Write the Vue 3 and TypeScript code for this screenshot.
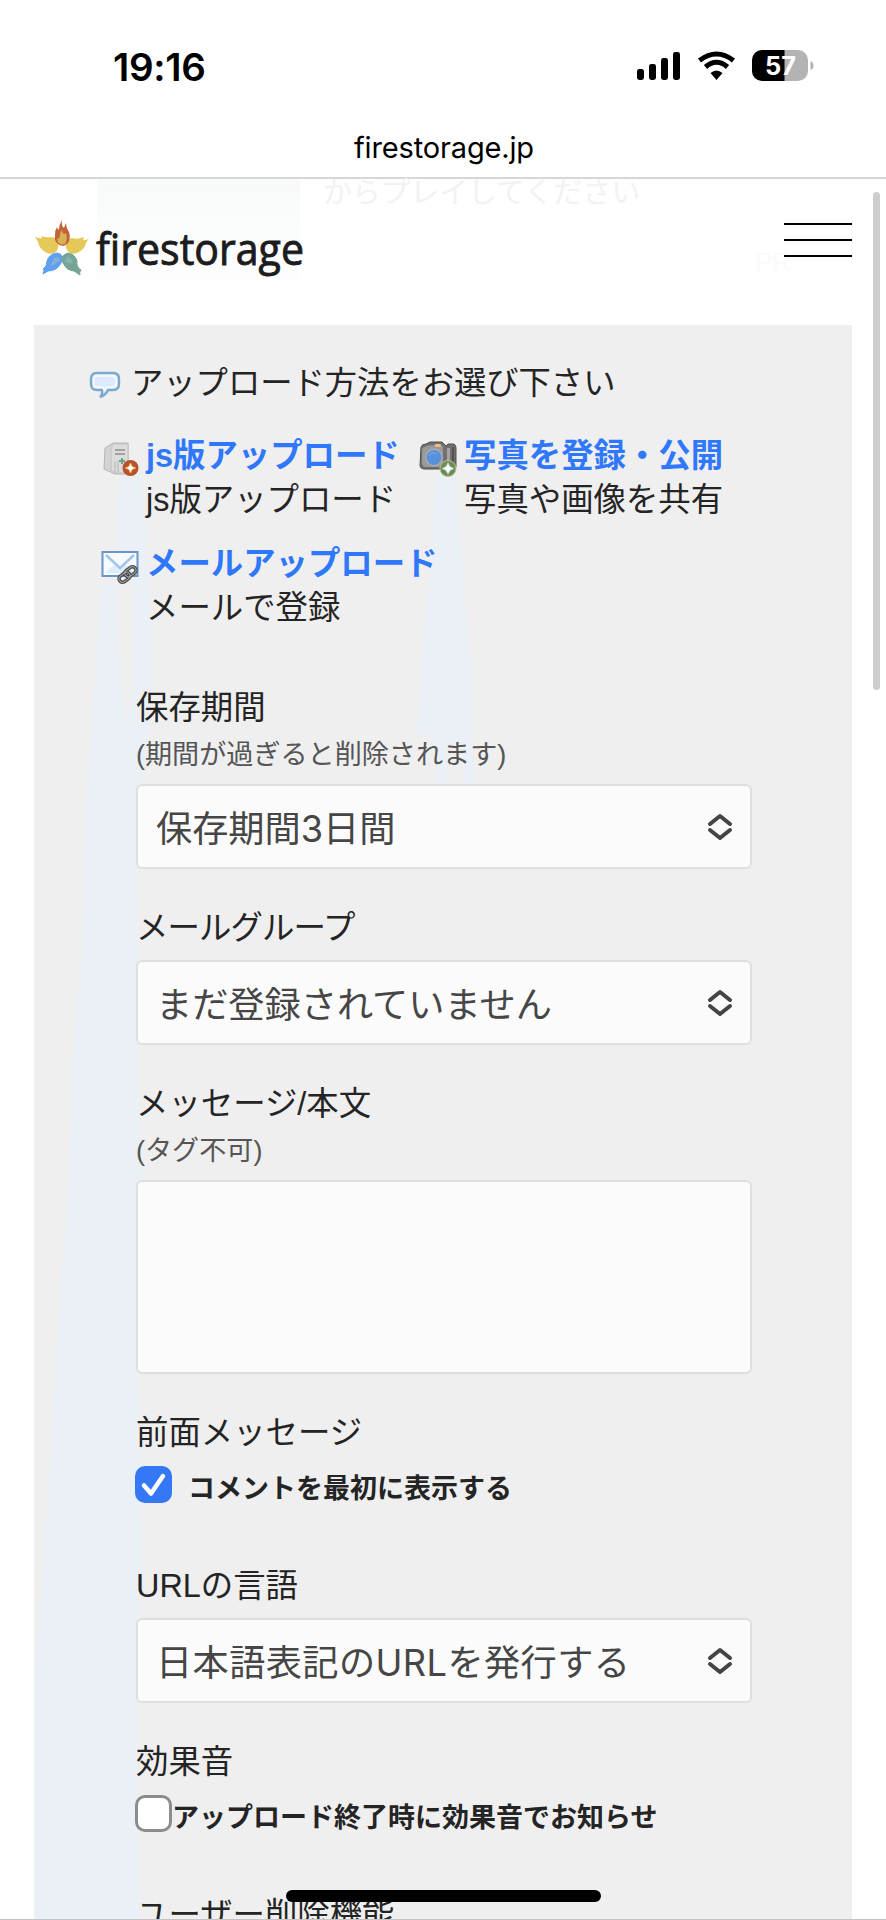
<script setup lang="ts">
import { ref } from 'vue'

interface Method {
  icon: 'server' | 'camera' | 'mail'
  title: string
  note: string
}

const methods: Method[] = [
  { icon: 'server', title: 'js版アップロード', note: 'js版アップロード' },
  { icon: 'camera', title: '写真を登録・公開', note: '写真や画像を共有' },
  { icon: 'mail', title: 'メールアップロード', note: 'メールで登録' },
]

const period = ref('保存期間3日間')
const group = ref('まだ登録されていません')
const message = ref('')
const showComment = ref(true)
const language = ref('日本語表記のURLを発行する')
const playSound = ref(false)
</script>

<template>
  <div class="phone">
    <header class="status">
      <div class="status-row">
        <div class="clock">19:16</div>
        <svg class="signals" width="180" height="40" viewBox="0 0 180 40">
          <rect x="1" y="22" width="7" height="11" rx="2.4" />
          <rect x="13" y="17" width="7" height="16" rx="2.4" />
          <rect x="25" y="11" width="7" height="22" rx="2.4" />
          <rect x="37" y="5" width="7" height="28" rx="2.4" />
          <g fill="none" stroke="#000" stroke-width="5">
            <path d="M63.5 13.5Q80.500 0.500 97.500 13.5" />
            <path d="M69.500 20Q80.500 10.500 91.500 20" />
          </g>
          <path d="M74.500 26Q80.500 21 86.500 26L80.500 33Z" />
          <clipPath id="cell"><rect x="116" y="3" width="56" height="31" rx="10" /></clipPath>
          <g clip-path="url(#cell)">
            <rect x="116" y="3" width="56" height="31" fill="#b3b3b3" />
            <rect x="116" y="3" width="32.500" height="31" />
          </g>
          <path d="M174.500 14Q177.500 15 177.500 18.500T174.500 23Z" fill="#b3b3b3" />
          <text class="charge" x="129" y="28" textLength="31" lengthAdjust="spacingAndGlyphs">57</text>
        </svg>
      </div>
      <div class="host">firestorage.jp</div>
    </header>

    <div class="site-head">
      <div class="ghost-image"></div>
      <div class="ghost-text">からプレイしてください</div>
      <div class="ghost-pr">PR</div>
      <svg class="logo" width="290" height="76" viewBox="0 0 290 76">
        <g transform="translate(0 4)">
          <path d="M1 16Q4 19 8 18Q6 15 6 16Q13 18 18 17Q26 19 24 28Q21 36 13 33Q5 29 4 22Z" fill="#e4c858" />
          <path d="M55 18Q52 21 49 20L50 17Q43 20 38 18Q30 20 32 28Q36 36 43 33Q51 29 52 23Z" fill="#e4c858" />
          <path d="M13 41Q15 34 23 33Q31 34 27 43Q23 51 14 51L9 54Q11 50 9 49Q13 47 13 41Z" fill="#5f9ff0" stroke="#5f9ff0" />
          <path d="M43 41Q41 34 34 33Q25 36 29 43Q33 51 40 51L46 55Q45 52 47 50Q42 47 43 41Z" fill="#76a493" stroke="#76a493" />
          <path d="M28 0Q27 6 30 8L32 3Q32 8 35 12Q38 23 29 26Q19 24 21 15Q21 10 23 7Q24 11 25 9Q25 5 28 0Z" fill="#c2613a" />
          <path d="M28 10Q29 16 32 13Q34 20 31 24Q23 26 23 18Q25 20 26 16Q26 12 28 10Z" fill="#d6b255" />
          <path d="M20 38Q25 36 26 40Q21 45 16 47ZM33 37Q37 36 39 43Q34 44 31 41Z" fill="#91b7cf" opacity=".7" />
        </g>
        <text x="62" y="48.500" textLength="208" lengthAdjust="spacingAndGlyphs">firestorage</text>
      </svg>
      <button class="menu" aria-label="menu"><i></i><i></i><i></i></button>
    </div>

    <main class="panel">
      <svg class="streaks" width="818" height="1595" viewBox="34 325 818 1595">
        <path d="M120 476L141 476L146 530L149 580L152 640L151 720L142 784L136 870L139 960L137 1080L143 1180L137 1210L137 1380L142 1540L141 1640L137 1700L138 1830L141 1920L34 1920L34 1680L42 1590L51 1450L61 1290L70 1160L72 1070L82 950L84 850L87 784L93 720L97 640L101 584L116 584L118 640L122 700L127 722L132 700L132 640L134 590L116 570L118 510Z" />
        <path d="M436 474L454 474L458 520L463 560L466 620L472 670L473 740L475 784L464 784L465 745L448 745L447 784L437 784L432 740L416 730L421 690L423 640L430 570L432 520Z" />
      </svg>

      <h1 class="title">
        <svg width="34" height="32" viewBox="0 0 34 32">
          <path d="M7.500 3H24Q30 3 30 9V14Q30 20 24 20H19Q17 25 11 27Q14 24 13 20H8Q2 20 2 14V9Q2 3 7.500 3Z" fill="#e8f1ff" stroke="#7ba9cd" stroke-width="2.400" />
          <path d="M8 6H24Q27 6 27 10V13Q27 17 23 17H17L15 20L14 17H8Q5 17 5 13V10Q5 6 8 6Z" fill="#deebff" stroke="#fff" />
        </svg>
        <span>アップロード方法をお選び下さい</span>
      </h1>

      <div class="methods">
        <a v-for="m in methods" :key="m.title" class="method" :class="m.icon">
          <svg v-if="m.icon === 'server'" width="40" height="40" viewBox="0 0 40 40">
            <path d="M4 7L12 2H27L27 33L14 33L3 28Z" fill="#d4d4d4" stroke="#b4b4b4" />
            <path d="M12 3H27V32H14L10 29V8Z" fill="#dcdcdc" stroke="#c2c2c2" />
            <path d="M14 9H24M14 13H24" stroke="#8f8f8f" stroke-width="1.600" />
            <path d="M14 20V31M17 20V31" stroke="#b4b4b4" />
            <path d="M21 17V23M18 20H24" stroke="#64a386" stroke-width="2" />
            <circle cx="29.500" cy="27" r="8" fill="#b7522d" />
            <path d="M29.500 22L31 25.500L34.500 27L31 28.500L29.500 32L28 28.500L24.500 27L28 25.500Z" fill="#fff" stroke="#f0c675" />
          </svg>
          <svg v-else-if="m.icon === 'camera'" width="40" height="40" viewBox="0 0 40 40">
            <path d="M2 6Q3 3 7 3L11 1H23L27 5L29 3H35Q37 4 37 7V26Q35 28 31 28H5Q2 28 1 25Z" fill="#707070" stroke="#505050" />
            <path d="M3 7Q12 2 24 5V26H5L3 23Z" fill="#999" />
            <path d="M28 7H31V25H28Z" fill="#a4a4a4" />
            <path d="M33 6H35V24H33Z" fill="#515151" />
            <rect x="16" y="3" width="6" height="3" rx="1" fill="#f0bd76" />
            <circle cx="15" cy="16.500" r="9" fill="#adadad" />
            <circle cx="15" cy="16.500" r="7.500" fill="#5791dc" />
            <path d="M10 15Q12 10 18 13" stroke="#84aadc" fill="none" />
            <circle cx="29" cy="27.500" r="8" fill="#668c61" stroke="#d6bf75" />
            <path d="M29 21.500L31 25.500L35 27.500L31 29.500L29 33.500L27 29.500L23 27.500L27 25.500Z" fill="#fff" stroke="#a3c9a5" />
          </svg>
          <svg v-else width="40" height="40" viewBox="0 0 40 40">
            <rect x="1.500" y="3" width="35" height="24" fill="#f5faff" stroke="#6896c9" stroke-width="2" />
            <path d="M4 24L14 15L19 19L24 15L34 24Z" fill="#e0edff" />
            <path d="M5 6L19 19L33 6" fill="none" stroke="#a5c5e5" stroke-width="2.500" />
            <g fill="none" transform="translate(26.500 25.500) rotate(-36)">
              <rect x="-10" y="-3" width="12" height="7" rx="3.500" stroke="#494949" stroke-width="3.500" />
              <rect x="-2" y="-4" width="12" height="7" rx="3.500" stroke="#494949" stroke-width="3.500" />
              <rect x="-10" y="-3" width="12" height="7" rx="3.500" stroke="#a8a8a8" />
              <rect x="-2" y="-4" width="12" height="7" rx="3.500" stroke="#a8a8a8" />
            </g>
          </svg>
          <span class="method-text"><b>{{ m.title }}</b><span>{{ m.note }}</span></span>
        </a>
      </div>

      <form class="form" @submit.prevent>
        <section class="field">
          <label class="name">保存期間</label>
          <p class="hint">(期間が過ぎると削除されます)</p>
          <div class="picker">
            <select v-model="period"><option>保存期間3日間</option></select>
            <svg width="26" height="30" viewBox="0 0 26 30"><path d="M3 12L13 4L23 12M3 18L13 26L23 18" /></svg>
          </div>
        </section>

        <section class="field">
          <label class="name tight">メールグループ</label>
          <div class="picker">
            <select v-model="group"><option>まだ登録されていません</option></select>
            <svg width="26" height="30" viewBox="0 0 26 30"><path d="M3 12L13 4L23 12M3 18L13 26L23 18" /></svg>
          </div>
        </section>

        <section class="field">
          <label class="name">メッセージ/本文</label>
          <p class="hint">(タグ不可)</p>
          <textarea v-model="message"></textarea>
        </section>

        <section class="field check-field">
          <label class="name">前面メッセージ</label>
          <label class="check spaced">
            <input v-model="showComment" type="checkbox" />
            <svg v-if="showComment" width="37" height="37" viewBox="0 0 37 37"><path d="M9 19.500L16 27.500L28 10" /></svg>
            <span>コメントを最初に表示する</span>
          </label>
        </section>

        <section class="field">
          <label class="name">URLの言語</label>
          <div class="picker wide">
            <select v-model="language"><option>日本語表記のURLを発行する</option></select>
            <svg width="26" height="30" viewBox="0 0 26 30"><path d="M3 12L13 4L23 12M3 18L13 26L23 18" /></svg>
          </div>
        </section>

        <section class="field check-field">
          <label class="name">効果音</label>
          <label class="check">
            <input v-model="playSound" type="checkbox" />
            <span>アップロード終了時に効果音でお知らせ</span>
          </label>
        </section>

        <section class="field">
          <label class="name">ユーザー削除機能</label>
        </section>
      </form>
    </main>

    <div class="scrollbar"></div>
    <div class="home"></div>
    <div class="edge"></div>
  </div>
</template>

<style>
html,
body {
  margin: 0;
  background: #fff;
}
</style>

<style scoped>
* {
  box-sizing: border-box;
}
.phone {
  position: relative;
  width: 886px;
  height: 1920px;
  overflow: hidden;
  background: #fff;
  color: #242424;
  font-family: "Liberation Sans", "Noto Sans CJK JP", sans-serif;
}
.status {
  height: 179px;
  border-bottom: 2px solid #d6d6d6;
  color: #000;
  font-family: Inter, "Noto Sans CJK JP", sans-serif;
}
.status-row {
  display: flex;
  justify-content: space-between;
  height: 87px;
  padding: 47px 70px 0 113px;
}
.clock {
  font-size: 38.500px;
  font-weight: 600;
  line-height: 40px;
  letter-spacing: -0.300px;
}
.charge {
  fill: #fff;
  font-size: 25px;
  font-weight: 700;
}
.host {
  margin-top: 41px;
  padding-left: 2px;
  font-size: 29px;
  line-height: 40px;
  text-align: center;
  letter-spacing: -0.150px;
}
.site-head {
  position: relative;
  display: flex;
  justify-content: space-between;
  height: 146px;
  padding: 37px 34px 0;
}
.logo {
  position: relative;
}
.logo text {
  font-family: "Open Sans", sans-serif;
  font-size: 43px;
  fill: #1c1c1c;
  stroke: #1c1c1c;
  stroke-width: 0.900px;
}
.menu {
  position: relative;
  display: flex;
  flex-direction: column;
  gap: 14px;
  width: 68px;
  height: 34px;
  margin-top: 7px;
  padding: 0;
  border: 0;
  background: none;
}
.menu i {
  height: 2px;
  background: #000;
}
.ghost-image {
  position: absolute;
  left: 97px;
  top: 0;
  width: 203px;
  height: 101px;
  background: linear-gradient(#f8fafa, #fdfdfd);
}
.ghost-text {
  position: absolute;
  left: 323px;
  top: -6px;
  font-size: 29px;
  line-height: 40px;
  color: #f2f2f2;
}
.ghost-pr {
  position: absolute;
  left: 755px;
  top: 67px;
  font-size: 26px;
  line-height: 32px;
  color: #fafafa;
}
.panel {
  position: relative;
  width: 818px;
  height: 1595px;
  margin-left: 34px;
  padding-top: 36px;
  background: #efefef;
}
.streaks {
  position: absolute;
  left: 0;
  top: 0;
  fill: #eaf0f6;
}
.title {
  position: relative;
  display: flex;
  align-items: center;
  gap: 8px;
  height: 44px;
  margin: 0;
  padding-left: 55px;
  font-size: 32.300px;
  font-weight: 400;
  line-height: 44px;
}
.title svg {
  flex: none;
  margin-top: 5px;
}
.methods {
  position: relative;
  display: grid;
  grid-template-columns: 318px 400px;
  row-gap: 20px;
  margin-top: 29px;
  padding-left: 67px;
}
.method {
  display: flex;
  gap: 5px;
  font-size: 32.400px;
  line-height: 44px;
  white-space: nowrap;
}
.method svg {
  flex: none;
  margin-top: 7px;
}
.method-text {
  display: flex;
  flex-direction: column;
}
.method b {
  color: #2f78fb;
}
.form {
  position: relative;
  display: flex;
  flex-direction: column;
  gap: 37px;
  width: 616px;
  margin: 56px 0 0 102px;
}
.name {
  display: block;
  height: 44px;
  font-size: 32.400px;
  line-height: 44px;
}
.tight {
  letter-spacing: -0.900px;
}
.hint {
  height: 40px;
  margin: 5px 0 0;
  font-size: 27.100px;
  line-height: 40px;
  color: #555;
}
.hint + * {
  margin-top: 9px;
}
.picker {
  display: grid;
  align-items: center;
  height: 85px;
  margin-top: 10px;
}
.hint + .picker {
  margin-top: 9px;
}
.picker select,
.picker svg {
  grid-area: 1 / 1;
}
.picker select {
  appearance: none;
  width: 100%;
  height: 85px;
  margin: 0;
  padding: 4px 60px 0 18px;
  border: 2px solid #dfdfdf;
  border-radius: 6px;
  background: #fbfbfb;
  color: #464646;
  font-family: Inter, "Noto Sans CJK JP", sans-serif;
  font-size: 36.200px;
}
.wide select {
  letter-spacing: 0.400px;
}
.picker svg {
  justify-self: end;
  margin-right: 19px;
  fill: none;
  stroke: #444;
  stroke-width: 4;
  stroke-linecap: round;
  stroke-linejoin: round;
  pointer-events: none;
}
textarea {
  display: block;
  width: 100%;
  height: 194px;
  border: 2px solid #dfdfdf;
  border-radius: 6px;
  background: #fbfbfb;
  resize: none;
}
.check {
  position: relative;
  display: flex;
  align-items: center;
  height: 37px;
  margin-top: 11px;
  font-size: 27px;
  font-weight: 700;
}
.check span {
  line-height: 37px;
  margin-top: 10px;
}
.spaced {
  gap: 16px;
}
.check input {
  appearance: none;
  flex: none;
  width: 37px;
  height: 37px;
  margin: 0 0 0 -1px;
  border: 3px solid #8c8c8c;
  border-radius: 10px;
  background: #fff;
}
.check input:checked {
  border: 0;
  background: #3478f6;
}
.check svg {
  position: absolute;
  left: -1px;
  top: 0;
  fill: none;
  stroke: #fff;
  stroke-width: 4.500;
  stroke-linecap: round;
  stroke-linejoin: round;
}
.check-field {
  margin-bottom: 24px;
}
.scrollbar {
  position: absolute;
  left: 873px;
  top: 192px;
  width: 7px;
  height: 498px;
  border-radius: 4px;
  background: #cdcdcd;
}
.home {
  position: absolute;
  left: 286px;
  top: 1890px;
  width: 315px;
  height: 12px;
  border-radius: 6px;
  background: #000;
}
.edge {
  position: absolute;
  left: 0;
  bottom: 0;
  width: 100%;
  height: 1px;
  background: #c4c4c4;
}
</style>
